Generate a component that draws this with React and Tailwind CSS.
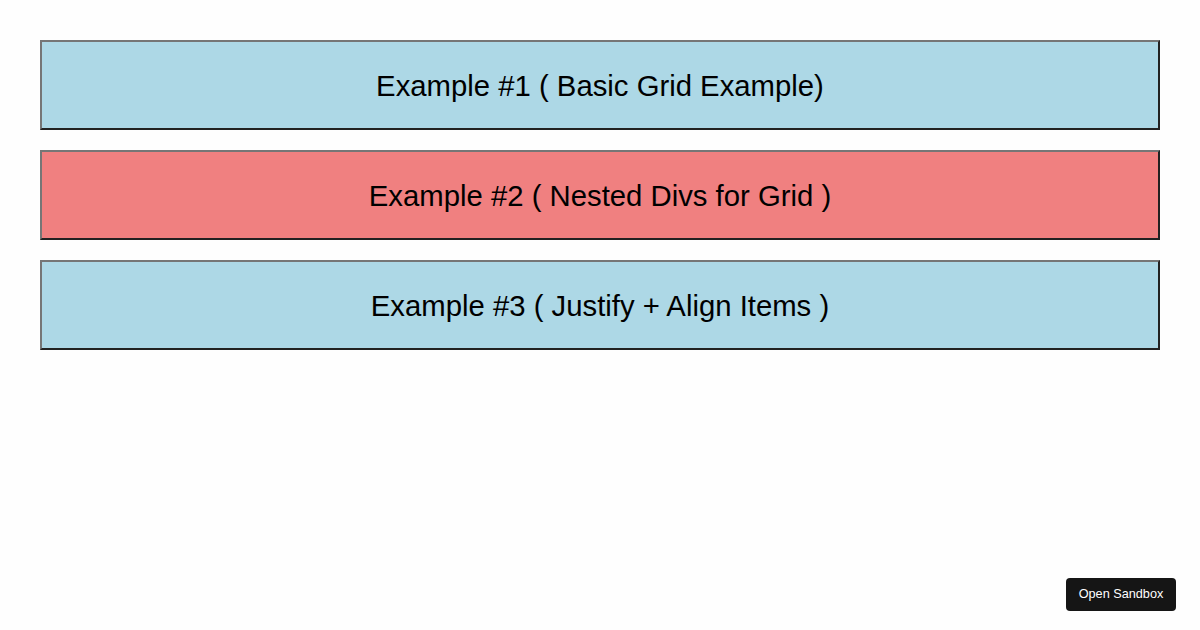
export default function App() {
  const examples = [
    { label: "Example #1 ( Basic Grid Example)", bg: "bg-[#add8e6]" },
    { label: "Example #2 ( Nested Divs for Grid )", bg: "bg-[#f08080]" },
    { label: "Example #3 ( Justify + Align Items )", bg: "bg-[#add8e6]" },
  ];

  return (
    <div className="relative h-[630px] w-[1200px] bg-[#fefefe] p-10 font-['Liberation_Sans',Arial,sans-serif]">
      <div className="flex flex-col gap-5">
        {examples.map((ex) => (
          <div
            key={ex.label}
            className={`flex h-[90px] items-center justify-center border-2 border-t-[#767676] border-l-[#767676] border-b-[#222] border-r-[#222] pt-px text-[29.3px] text-black ${ex.bg}`}
          >
            {ex.label}
          </div>
        ))}
      </div>
      <button
        type="button"
        className="absolute bottom-[19px] right-6 h-[33px] w-[110px] rounded-[4px] bg-[#151515] pt-px text-[12.7px] text-white"
      >
        Open Sandbox
      </button>
    </div>
  );
}
